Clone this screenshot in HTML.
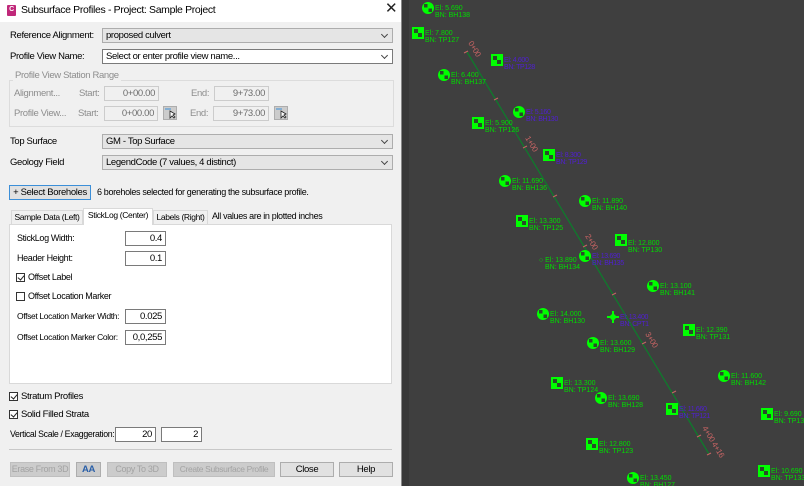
<!DOCTYPE html>
<html><head><meta charset="utf-8"><style>
*{box-sizing:border-box;margin:0;padding:0}
body{width:804px;height:486px;overflow:hidden;background:#3f3f3f;font-family:"Liberation Sans",sans-serif;font-size:9.5px;letter-spacing:-0.35px;color:#000;position:relative}
.a{position:absolute;white-space:nowrap}
#dlg{position:absolute;left:0;top:0;width:402px;height:486px;background:#f0f0f0;border-right:1px solid #888}
.t{position:absolute;white-space:nowrap;line-height:13px}
.cb{position:absolute;height:15px;background:#e5e5e5;border:1px solid #adadad;padding-left:3px;line-height:13px;white-space:nowrap;overflow:hidden}
.cb.w{background:#fff;border-color:#7a7a7a}
.cb:after{content:"";position:absolute;right:5px;top:3px;width:4px;height:4px;border-right:1px solid #444;border-bottom:1px solid #444;transform:rotate(45deg)}
.in{position:absolute;height:15px;background:#fff;border:1px solid #7a7a7a;text-align:right;padding-right:3px;line-height:13px;white-space:nowrap;overflow:hidden}
.dis{background:#f0f0f0;border-color:#ccc;color:#6d6d6d}
.g{color:#8d8d8d}
.chk{position:absolute;width:9px;height:9px;border:1px solid #333;background:#fff}
.chk.on:after{content:"";position:absolute;left:2px;top:0px;width:3px;height:5px;border-right:1px solid #222;border-bottom:1px solid #222;transform:rotate(40deg)}
.btn{position:absolute;height:15px;border:1px solid #adadad;background:#e1e1e1;text-align:center;line-height:13px;white-space:nowrap;overflow:hidden}
.btn.d{background:#ccc;border-color:#bfbfbf;color:#a3a3a3}
.pk{position:absolute;width:14px;height:14px;background:#ccc;border:1px solid #adadad}
</style></head><body>
<svg class="a" style="left:0;top:0" width="804" height="486" font-family="Liberation Sans" font-size="7">
<rect x="402" y="0" width="7" height="486" fill="#383838"/>
<line x1="467" y1="52" x2="709" y2="454" stroke="#0f7a2c" stroke-width="1.3"/>
<g stroke="#c86464" stroke-width="1">
<line x1="464" y1="53" x2="468" y2="51"/><line x1="494" y1="100" x2="498" y2="98"/><line x1="523" y1="148" x2="527" y2="146"/><line x1="553" y1="197" x2="557" y2="195"/><line x1="583" y1="247" x2="587" y2="245"/><line x1="612" y1="295" x2="616" y2="293"/><line x1="642" y1="344" x2="646" y2="342"/><line x1="672" y1="393" x2="676" y2="391"/><line x1="697" y1="437" x2="701" y2="435"/><line x1="707" y1="455" x2="711" y2="453"/>
</g>
<g fill="#c86464" font-size="8">
<text transform="translate(468,43) rotate(59)">0+00</text>
<text transform="translate(525,138) rotate(59)">1+00</text>
<text transform="translate(585,236) rotate(59)">2+00</text>
<text transform="translate(645,334) rotate(59)">3+00</text>
<text transform="translate(702,428) rotate(59)">4+00 4+16</text>
</g>
<defs>
<g id="c"><circle r="6" fill="#00ff00"/><rect x="-4" y="-4" width="3.5" height="3.5" fill="#2a4a2a"/><rect x="0.5" y="0.5" width="3.5" height="3.5" fill="#2a4a2a"/></g>
<g id="s"><rect x="-6" y="-6" width="12" height="12" fill="#00ff00"/><rect x="-4" y="-4" width="4" height="4" fill="#2a4a2a"/><rect x="0" y="0" width="4" height="4" fill="#2a4a2a"/></g>
</defs>
<g>
<use href="#c" x="428" y="8"/><use href="#s" x="418" y="33"/><use href="#s" x="497" y="60"/><use href="#c" x="444" y="75"/><use href="#c" x="519" y="112"/><use href="#s" x="478" y="123"/><use href="#s" x="549" y="155"/><use href="#c" x="505" y="181"/><use href="#c" x="585" y="201"/><use href="#s" x="522" y="221"/><use href="#s" x="621" y="240"/><use href="#c" x="585" y="256"/><use href="#c" x="653" y="286"/><use href="#c" x="543" y="314"/><use href="#s" x="689" y="330"/><use href="#c" x="593" y="343"/><use href="#c" x="724" y="376"/><use href="#s" x="557" y="383"/><use href="#c" x="601" y="398"/><use href="#s" x="672" y="409"/><use href="#s" x="767" y="414"/><use href="#s" x="592" y="444"/><use href="#c" x="633" y="478"/><use href="#s" x="764" y="471"/>
<g stroke="#00ff00" stroke-width="2"><line x1="607" y1="317" x2="619" y2="317"/><line x1="613" y1="311" x2="613" y2="323"/></g><circle cx="613" cy="317" r="3" fill="#00ff00"/>
</g>
<g fill="#00dd00" letter-spacing="0">
<text x="435" y="10">El: 5.690</text><text x="435" y="17">BN: BH138</text>
<text x="425" y="35">El: 7.800</text><text x="425" y="42">BN: TP127</text>
<text x="451" y="77">El: 6.400</text><text x="451" y="84">BN: BH137</text>
<text x="485" y="125">El: 5.900</text><text x="485" y="132">BN: TP126</text>
<text x="512" y="183">El: 11.690</text><text x="512" y="190">BN: BH136</text>
<text x="592" y="203">El: 11.890</text><text x="592" y="210">BN: BH140</text>
<text x="529" y="223">El: 13.300</text><text x="529" y="230">BN: TP125</text>
<text x="628" y="245">El: 12.800</text><text x="628" y="252">BN: TP130</text>
<text x="539" y="262">○ El: 13.890</text><text x="545" y="269">BN: BH134</text>
<text x="660" y="288">El: 13.100</text><text x="660" y="295">BN: BH141</text>
<text x="550" y="316">El: 14.000</text><text x="550" y="323">BN: BH130</text>
<text x="696" y="332">El: 12.390</text><text x="696" y="339">BN: TP131</text>
<text x="600" y="345">El: 13.600</text><text x="600" y="352">BN: BH129</text>
<text x="731" y="378">El: 11.600</text><text x="731" y="385">BN: BH142</text>
<text x="564" y="385">El: 13.300</text><text x="564" y="392">BN: TP124</text>
<text x="608" y="400">El: 13.690</text><text x="608" y="407">BN: BH128</text>
<text x="774" y="416">El: 9.690</text><text x="774" y="423">BN: TP132</text>
<text x="599" y="446">El: 12.800</text><text x="599" y="453">BN: TP123</text>
<text x="640" y="480">El: 13.450</text><text x="640" y="487">BN: BH127</text>
<text x="771" y="473">El: 10.690</text><text x="771" y="480">BN: TP133</text>
</g>
<g fill="#5020d0">
<text x="504" y="62">El: 4.600</text><text x="504" y="69">BN: TP128</text>
<text x="526" y="114">El: 5.160</text><text x="526" y="121">BN: BH130</text>
<text x="556" y="157">El: 8.300</text><text x="556" y="164">BN: TP129</text>
<text x="592" y="258">El: 13.690</text><text x="592" y="265">BN: BH135</text>
<text x="620" y="319">El: 13.400</text><text x="620" y="326">BN: CPT1</text>
<text x="679" y="411">El: 11.660</text><text x="679" y="418">BN: TP121</text>
</g>
</svg>

<div id="dlg">
<div class="a" style="left:0;top:0;width:401px;height:22px;background:#fff"></div>
<div class="a" style="left:7px;top:5px;width:9px;height:11px;background:#c0287a;border-radius:1px;color:#fff;font-size:7px;line-height:9px;text-align:center;font-weight:bold">C</div>
<div class="t" style="left:21px;top:4px;font-size:10.5px">Subsurface Profiles - Project: Sample Project</div>
<div class="t" style="left:385px;top:2px;font-size:15px;color:#222">✕</div>

<div class="t" style="left:10px;top:29px">Reference Alignment:</div>
<div class="cb" style="left:102px;top:28px;width:291px">proposed culvert</div>
<div class="t" style="left:10px;top:50px">Profile View Name:</div>
<div class="cb w" style="left:102px;top:49px;width:291px">Select or enter profile view name...</div>

<div class="a" style="left:9px;top:80px;width:385px;height:47px;border:1px solid #dcdcdc"></div>
<div class="t g" style="left:13px;top:69px;background:#f0f0f0;padding:0 2px">Profile View Station Range</div>
<div class="t g" style="left:14px;top:87px">Alignment...</div>
<div class="t g" style="left:79px;top:87px">Start:</div>
<div class="in dis" style="left:104px;top:86px;width:55px">0+00.00</div>
<div class="t g" style="left:191px;top:87px">End:</div>
<div class="in dis" style="left:214px;top:86px;width:55px">9+73.00</div>
<div class="t g" style="left:14px;top:107px">Profile View...</div>
<div class="t g" style="left:78px;top:107px">Start:</div>
<div class="in dis" style="left:104px;top:106px;width:54px">0+00.00</div>
<div class="pk" style="left:163px;top:106px"><svg width="12" height="12"><line x1="1" y1="2" x2="7" y2="2" stroke="#3c8fd8"/><path d="M6 4 L6 11 L8 9 L10 11 L11 10 L9 8 L11 7 Z" fill="#fff" stroke="#222" stroke-width=".8"/></svg></div>
<div class="t g" style="left:190px;top:107px">End:</div>
<div class="in dis" style="left:213px;top:106px;width:56px">9+73.00</div>
<div class="pk" style="left:274px;top:106px"><svg width="12" height="12"><line x1="1" y1="2" x2="7" y2="2" stroke="#3c8fd8"/><path d="M6 4 L6 11 L8 9 L10 11 L11 10 L9 8 L11 7 Z" fill="#fff" stroke="#222" stroke-width=".8"/></svg></div>

<div class="t" style="left:10px;top:135px">Top Surface</div>
<div class="cb" style="left:102px;top:134px;width:291px">GM - Top Surface</div>
<div class="t" style="left:10px;top:156px">Geology Field</div>
<div class="cb" style="left:102px;top:155px;width:291px">LegendCode (7 values, 4 distinct)</div>

<div class="btn" style="left:9px;top:185px;width:82px;border-color:#3c8fd8">+ Select Boreholes</div>
<div class="t" style="left:97px;top:186px;font-size:9px">6 boreholes selected for generating the subsurface profile.</div>

<div class="a" style="left:9px;top:224px;width:383px;height:160px;background:#fff;border:1px solid #d9d9d9"></div>
<div class="btn" style="left:11px;top:210px;width:72px;height:15px;background:#f0f0f0;border-color:#d9d9d9;font-size:8.5px">Sample Data (Left)</div>
<div class="btn" style="left:83px;top:208px;width:70px;height:17px;background:#fff;border-color:#d9d9d9;border-bottom:none;font-size:8.5px">StickLog (Center)</div>
<div class="btn" style="left:153px;top:210px;width:55px;height:15px;background:#f0f0f0;border-color:#d9d9d9;font-size:8.5px">Labels (Right)</div>
<div class="t" style="left:212px;top:210px;font-size:9px">All values are in plotted inches</div>

<div class="t" style="left:17px;top:232px;font-size:9px">StickLog Width:</div>
<div class="in" style="left:125px;top:231px;width:41px">0.4</div>
<div class="t" style="left:17px;top:252px;font-size:9px">Header Height:</div>
<div class="in" style="left:125px;top:251px;width:41px">0.1</div>
<div class="chk on" style="left:16px;top:273px"></div>
<div class="t" style="left:28px;top:271px;font-size:9px">Offset Label</div>
<div class="chk" style="left:16px;top:292px"></div>
<div class="t" style="left:28px;top:290px;font-size:9px">Offset Location Marker</div>
<div class="t" style="left:17px;top:310px;font-size:8.5px">Offset Location Marker Width:</div>
<div class="in" style="left:125px;top:309px;width:41px">0.025</div>
<div class="t" style="left:17px;top:331px;font-size:8.5px">Offset Location Marker Color:</div>
<div class="in" style="left:125px;top:330px;width:41px">0,0,255</div>

<div class="chk on" style="left:9px;top:392px"></div>
<div class="t" style="left:21px;top:390px">Stratum Profiles</div>
<div class="chk on" style="left:9px;top:410px"></div>
<div class="t" style="left:21px;top:408px">Solid Filled Strata</div>
<div class="t" style="left:10px;top:428px;font-size:8.8px">Vertical Scale / Exaggeration:</div>
<div class="in" style="left:115px;top:427px;width:41px">20</div>
<div class="in" style="left:161px;top:427px;width:41px">2</div>
<div class="a" style="left:9px;top:449px;width:383px;height:1px;background:#c8c8c8"></div>

<div class="btn d" style="left:10px;top:462px;width:60px;font-size:9px">Erase From 3D</div>
<div class="btn" style="left:76px;top:462px;width:25px;background:#ccc;color:#2a5fa8;font-weight:bold">AA</div>
<div class="btn d" style="left:107px;top:462px;width:60px;font-size:9px">Copy To 3D</div>
<div class="btn d" style="left:173px;top:462px;width:102px;font-size:8.5px">Create Subsurface Profile</div>
<div class="btn" style="left:280px;top:462px;width:54px">Close</div>
<div class="btn" style="left:339px;top:462px;width:54px">Help</div>
</div>
</body></html>
